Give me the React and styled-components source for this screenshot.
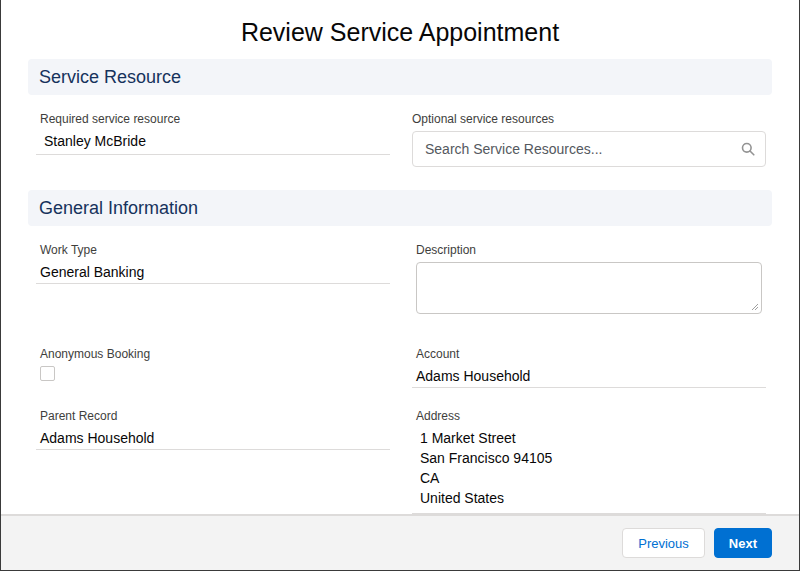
import React from 'react'
import styled, { createGlobalStyle } from 'styled-components'

const Global = createGlobalStyle`
  html, body { margin: 0; padding: 0; background: #fff; }
  body { font-family: "Liberation Sans", Arial, sans-serif; color: #080707; }
  * { box-sizing: border-box; }
`

const Frame = styled.div`
  height: 571px;
  display: flex;
  flex-direction: column;
  border: 1px solid #3a3a3a;
  border-top: none;
  overflow: hidden;
`

const Body = styled.div`
  flex: 1;
  padding: 0 27px 0 27px;
`

const Title = styled.h1`
  margin: 0;
  height: 59px;
  display: flex;
  align-items: center;
  justify-content: center;
  font-size: 25px;
  font-weight: 400;
  padding-top: 6px;
`

const SectionHead = styled.div`
  height: 36px;
  background: #f3f5f9;
  border-radius: 4px;
  display: flex;
  align-items: center;
  padding-left: 11px;
  font-size: 18px;
  color: #16325c;
`

const Grid = styled.div`
  display: grid;
  grid-template-columns: 354px 354px;
  column-gap: 22px;
  padding: ${p => p.$pad || '16px 8px 0 8px'};
  align-items: start;
`

const Field = styled.div`
  padding-left: ${p => p.$indent ?? 4}px;
  min-height: ${p => p.$h || 0}px;
  ${p => p.$line && 'border-bottom: 1px solid #dddbda;'}
`

const Label = styled.div`
  font-size: 12px;
  color: #3e3e3c;
  margin-bottom: 4px;
  line-height: 16px;
`

const Value = styled.div`
  font-size: 14px;
  line-height: 20px;
  padding: 0 0 ${p => p.$pb ?? 1}px ${p => p.$indent || 0}px;
`

const Search = styled.div`
  height: 36px;
  border: 1px solid #dddbda;
  border-radius: 4px;
  display: flex;
  align-items: center;
  justify-content: space-between;
  padding: 0 10px 0 12px;
  font-size: 14px;
  color: #54585e;
`

const TextArea = styled.div`
  height: 52px;
  border: 1px solid #c9c7c5;
  border-radius: 4px;
  position: relative;
  margin-right: 4px;
`

const Grip = styled.svg`
  position: absolute;
  right: 2px;
  bottom: 2px;
`

const Check = styled.div`
  width: 15px;
  height: 15px;
  border: 1px solid #c9c7c5;
  border-radius: 2px;
`

const Footer = styled.div`
  height: 56px;
  background: #f3f3f3;
  border-top: 2px solid #dddbda;
  display: flex;
  justify-content: flex-end;
  align-items: center;
  gap: 9px;
  padding-right: 27px;
`

const Button = styled.button`
  height: 30px;
  padding: 0 ${p => (p.$primary ? 14 : 15)}px;
  border-radius: 4px;
  font-family: inherit;
  font-size: 13px;
  font-weight: ${p => (p.$primary ? 700 : 400)};
  border: 1px solid ${p => (p.$primary ? '#0070d2' : '#dddbda')};
  background: ${p => (p.$primary ? '#0070d2' : '#fff')};
  color: ${p => (p.$primary ? '#fff' : '#0070d2')};
`

const Spacer = styled.div`
  height: 23px;
`

export default function App() {
  return (
    <Frame>
      <Global />
      <Body>
        <Title>Review Service Appointment</Title>
        <SectionHead>Service Resource</SectionHead>
        <Grid>
          <Field $line style={{ marginTop: 0 }}>
            <Label>Required service resource</Label>
            <Value $indent={4} $pb={3}>Stanley McBride</Value>
          </Field>
          <Field $indent={0}>
            <Label>Optional service resources</Label>
            <Search>
              Search Service Resources...
              <svg width="14" height="14" viewBox="0 0 14 14" fill="none" stroke="#939393" strokeWidth="1.6">
                <circle cx="5.8" cy="5.8" r="4.3" />
                <path d="M9 9l3.8 3.8" strokeLinecap="round" />
              </svg>
            </Search>
          </Field>
        </Grid>
        <Spacer />
        <SectionHead>General Information</SectionHead>
        <Grid>
          <Field $line>
            <Label>Work Type</Label>
            <Value>General Banking</Value>
          </Field>
          <Field>
            <Label>Description</Label>
            <TextArea>
              <Grip width="8" height="8" viewBox="0 0 8 8" stroke="#888" strokeWidth="0.8">
                <path d="M1 7L7 1M4 7L7 4" />
              </Grip>
            </TextArea>
          </Field>
        </Grid>
        <Grid $pad="32px 8px 0 8px">
          <Field $h={40}>
            <Label>Anonymous Booking</Label>
            <Check />
          </Field>
          <Field $line>
            <Label>Account</Label>
            <Value>Adams Household</Value>
          </Field>
        </Grid>
        <Grid $pad="20px 8px 0 8px">
          <Field $line>
            <Label>Parent Record</Label>
            <Value>Adams Household</Value>
          </Field>
          <Field $line>
            <Label>Address</Label>
            <Value $indent={4} $pb={5}>
              1 Market Street<br />San Francisco 94105<br />CA<br />United States
            </Value>
          </Field>
        </Grid>
      </Body>
      <Footer>
        <Button>Previous</Button>
        <Button $primary>Next</Button>
      </Footer>
    </Frame>
  )
}
